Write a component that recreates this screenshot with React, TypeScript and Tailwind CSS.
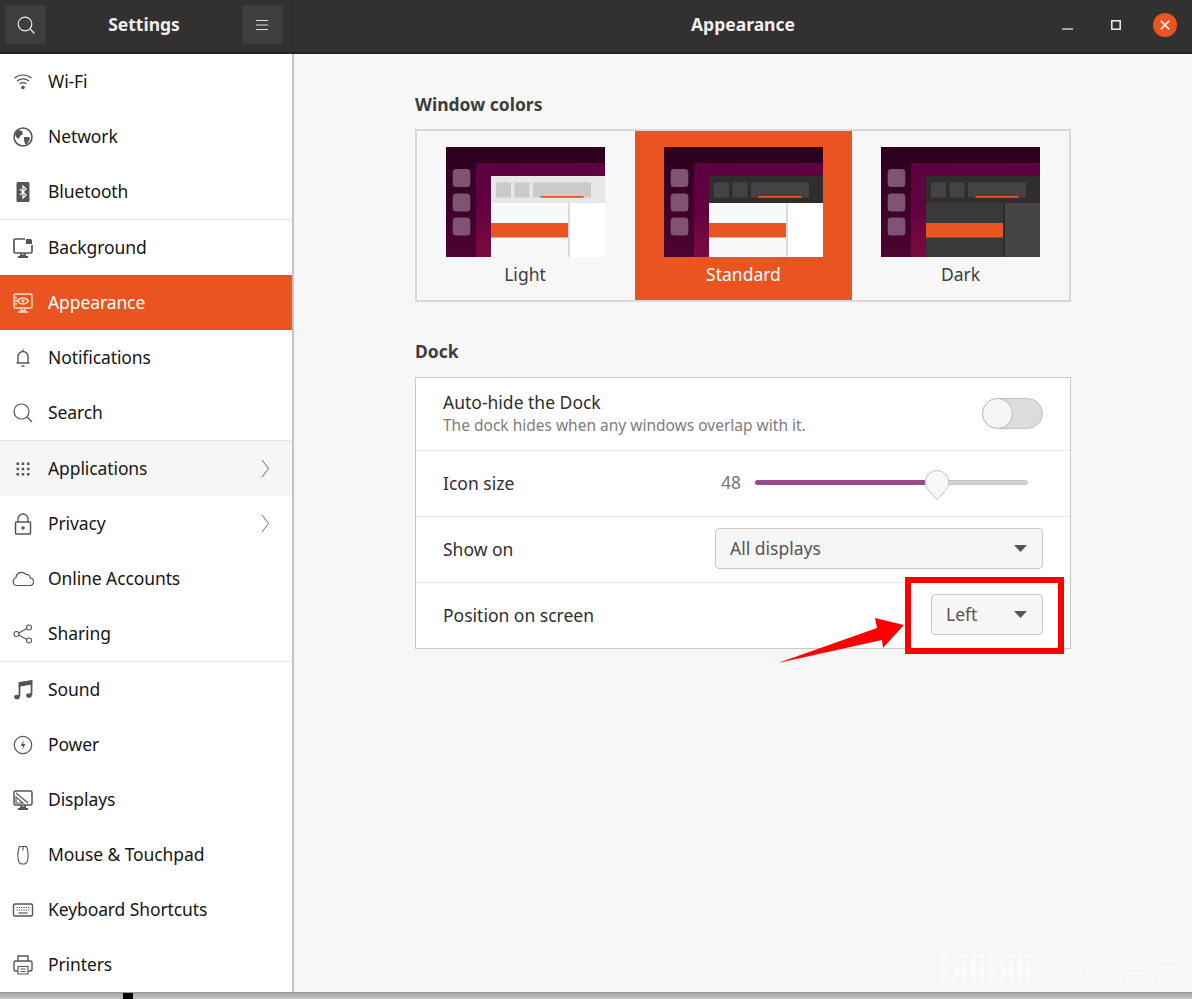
import React from "react";

const S = (p: { children: React.ReactNode; c?: string }) => (
  <svg width="24" height="24" viewBox="0 0 24 24" fill="none" stroke="currentColor" strokeWidth="1.4" className={p.c ?? "text-[#555]"}>{p.children}</svg>
);

const icons: Record<string, React.ReactNode> = {
  wifi: <S><path d="M3.500 8c4.800-4 12.200-4 17 0M6 11c3.500-2.800 8.500-2.800 12 0M8.500 13.800c2-1.400 5-1.400 7 0" strokeWidth="1.200" /><circle cx="12" cy="17.500" r="1.800" fill="currentColor" stroke="none" /></S>,
  network: <S><circle cx="12" cy="12" r="9" strokeWidth="1.600" /><path d="M7 5l4 1 1 3-3 2-1 3-3-2-1-3zM13 12l5 0 1 2-3 5-2 0-1-4z" fill="currentColor" stroke="none" /></S>,
  bluetooth: <S><rect x="5.500" y="2" width="13" height="20" rx="1.500" fill="currentColor" stroke="none" /><path d="M9 9l6 6-3 3V6l3 3-6 6" stroke="#fff" strokeWidth="1.200" /></S>,
  background: <S><path d="M14 3H4.500A1.500 1.500 0 0 0 3 4.500v11A1.500 1.500 0 0 0 4.500 17h15a1.500 1.500 0 0 0 1.500-1.500V9" strokeWidth="1.700" /><path d="M15 3h4.500A1.500 1.500 0 0 1 21 4.500V8h-6z" fill="currentColor" stroke="none" /><path d="M10 17.500v2h4v-2M7 21h10" strokeWidth="1.800" /></S>,
  appearance: <S c="text-[#fbd9c6]"><rect x="3" y="3" width="18" height="14" rx="1.500" /><path d="M6.500 10c3-4 8-4 11 0-3 4-8 4-11 0z" /><circle cx="12" cy="10" r="1.600" fill="currentColor" stroke="none" /><path d="M3 7h3M3 10h3M3 13h3M10 17.500v2h4v-2M7 21h10" /></S>,
  bell: <S><path d="M7 17v-6.500a5 5 0 0 1 10 0V17M5.500 17h13M10.500 20h3M12 3.500v2" /></S>,
  search: <S><circle cx="10.500" cy="10.500" r="7.500" strokeWidth="1.200" /><path d="M16 16l5 5" strokeWidth="1.200" /></S>,
  apps: <S><g fill="currentColor" stroke="none"><rect x="5.500" y="5.500" width="2.500" height="2.500" /><rect x="10.700" y="5.500" width="2.500" height="2.500" /><rect x="16" y="5.500" width="2.500" height="2.500" /><rect x="5.500" y="10.700" width="2.500" height="2.500" /><rect x="10.700" y="10.700" width="2.500" height="2.500" /><rect x="16" y="10.700" width="2.500" height="2.500" /><rect x="5.500" y="16" width="2.500" height="2.500" /><rect x="10.700" y="16" width="2.500" height="2.500" /><rect x="16" y="16" width="2.500" height="2.500" /></g></S>,
  lock: <S><rect x="4.500" y="10" width="15" height="12" rx=".8" strokeWidth="1.500" /><path d="M7 10V7a5 5 0 0 1 10 0v3" strokeWidth="1.300" /><rect x="10.500" y="14.500" width="3" height="3" fill="currentColor" stroke="none" /></S>,
  cloud: <S><path d="M6 18.500a4 4 0 0 1-1-7.800 5.500 5.500 0 0 1 9.800-3.200 4 4 0 0 1 4.700 3.500 3.800 3.800 0 0 1-.5 7.500z" strokeWidth="1.200" /></S>,
  share: <S><circle cx="5.500" cy="12" r="2.500" strokeWidth="1.100" /><circle cx="18" cy="5.500" r="2.500" strokeWidth="1.100" /><circle cx="18" cy="18.500" r="2.500" strokeWidth="1.100" /><path d="M7.800 11l8-4.400M7.800 13l8 4.400" strokeWidth="1.100" /></S>,
  sound: <S><path d="M8.500 18.500V5l12-2v14" strokeWidth="1.800" /><path d="M8.500 5l12-2v3l-12 2z" fill="currentColor" /><ellipse cx="6" cy="19" rx="2.800" ry="2.300" fill="currentColor" stroke="none" /><ellipse cx="18" cy="17.500" rx="2.800" ry="2.300" fill="currentColor" stroke="none" /></S>,
  power: <S><circle cx="12" cy="12" r="8.700" strokeWidth="1.200" /><path d="M13 7l-3.500 6H12l-1 4 3.500-6H12z" fill="currentColor" stroke="none" /></S>,
  display: <S><rect x="3" y="3" width="18" height="14" rx="1.500" strokeWidth="1.500" /><path d="M5 5l12 10M5 9v6h7z" strokeWidth="1.100" /><path d="M10 17.500v2h4v-2M7 21h10" strokeWidth="1.800" /></S>,
  mouse: <S><path d="M8.500 3.500h7c1.500 4 2 10 1 14a4 4 0 0 1-4.500 3.500A4 4 0 0 1 7.500 17.500c-1-4-.5-10 1-14zM12 3.500v4" strokeWidth="1.100" /></S>,
  keyboard: <S><rect x="2.500" y="6" width="19" height="12" rx="1.500" strokeWidth="1.400" /><path d="M5.500 9.500h13M5.500 12h13" strokeDasharray="1.300 1" strokeWidth="1.200" /><path d="M7.500 15h9" strokeWidth="1.200" /></S>,
  printer: <S><path d="M7 8V3h10v5M6.500 18H4.500A1.500 1.500 0 0 1 3 16.500v-7A1.500 1.500 0 0 1 4.500 8h15A1.500 1.500 0 0 1 21 9.500v7a1.500 1.500 0 0 1-1.500 1.500h-2" strokeWidth="1.400" /><path d="M7 13.500h10V21H7zM9.500 16h5M9.500 18.500h5" strokeWidth="1.200" /></S>,
};

type Row = { k: string; t: string; chevron?: boolean; active?: boolean; hover?: boolean };
const groups: Row[][] = [
  [{ k: "wifi", t: "Wi-Fi" }, { k: "network", t: "Network" }, { k: "bluetooth", t: "Bluetooth" }],
  [{ k: "background", t: "Background" }, { k: "appearance", t: "Appearance", active: true }, { k: "bell", t: "Notifications" }, { k: "search", t: "Search" }],
  [{ k: "apps", t: "Applications", chevron: true, hover: true }, { k: "lock", t: "Privacy", chevron: true }, { k: "cloud", t: "Online Accounts" }, { k: "share", t: "Sharing" }],
  [{ k: "sound", t: "Sound" }, { k: "power", t: "Power" }, { k: "display", t: "Displays" }, { k: "mouse", t: "Mouse & Touchpad" }, { k: "keyboard", t: "Keyboard Shortcuts" }, { k: "printer", t: "Printers" }],
];

function SideRow({ r }: { r: Row }) {
  return (
    <div className={`h-[55px] flex items-center pl-[11px] pr-[22px] text-[17.5px] ${r.active ? "bg-[#e95420] text-white" : r.hover ? "bg-[#f6f6f6] text-[#161616]" : "text-[#161616]"}`}>
      <span className="w-[24px] h-[24px] flex-none">{icons[r.k]}</span>
      <span className="ml-[13px] flex-1 tracking-[-0.1px]">{r.t}</span>
      {r.chevron && (
        <svg width="9" height="19" viewBox="0 0 9 19" fill="none" stroke="#666" strokeWidth="1" className="mb-[1px]"><path d="M1 1l6.500 8.500L1 18" /></svg>
      )}
    </div>
  );
}

function Preview({ kind }: { kind: "light" | "standard" | "dark" }) {
  const head = kind === "light" ? "#e5e7e9" : "#2f2d2d";
  const btn = kind === "light" ? "#c9caca" : "#444343";
  const body = kind === "dark" ? "#393939" : "#f8f9fb";
  const side = kind === "dark" ? "#454545" : "#ffffff";
  const sep = kind === "dark" ? "#2c2c2c" : "#dcdadc";
  const id = `g-${kind}`;
  return (
    <svg width="159" height="110" viewBox="0 0 159 110" className="block">
      <defs>
        <linearGradient id={id} x1="0" y1="0" x2="0.25" y2="1">
          <stop offset="0" stopColor="#5c0040" />
          <stop offset="0.55" stopColor="#610040" />
          <stop offset="1" stopColor="#7c0a41" />
        </linearGradient>
        <linearGradient id={`${id}d`} x1="0" y1="0" x2="0" y2="1">
          <stop offset="0" stopColor="#320024" />
          <stop offset="1" stopColor="#4c0430" />
        </linearGradient>
      </defs>
      <rect width="159" height="110" fill={`url(#${id})`} />
      <rect y="16" width="30" height="94" fill={`url(#${id}d)`} />
      <rect width="159" height="16" fill="#2c001e" />
      {[22, 46.500, 70.500].map((y) => (
        <rect key={y} x="6.700" y={y} width="17.600" height="18" rx="3.500" fill="#7e5472" />
      ))}
      <rect x="45" y="29" width="114" height="27" fill={head} />
      <rect x="50" y="35.500" width="15" height="15" fill={btn} />
      <rect x="68.500" y="35.500" width="15" height="15" fill={btn} />
      <rect x="87" y="35.500" width="58" height="15" fill={btn} />
      <rect x="94.500" y="49" width="43" height="1.800" fill="#e95420" />
      <rect x="45" y="56" width="77" height="54" fill={body} />
      <rect x="122" y="56" width="2" height="54" fill={sep} />
      <rect x="124" y="56" width="35" height="54" fill={side} />
      <rect x="45" y="76" width="77" height="14.500" fill="#e95420" />
    </svg>
  );
}

function ThemeCell({ kind, label, active, w }: { kind: "light" | "standard" | "dark"; label: string; active?: boolean; w: string }) {
  return (
    <div className={`${w} h-full flex flex-col items-center pt-[15px] ${active ? "bg-[#e95420] text-white" : "text-[#3d3d3d]"}`}>
      <Preview kind={kind} />
      <span className="mt-[4px] text-[17.5px] leading-[26px]">{label}</span>
    </div>
  );
}

function Select({ label, w }: { label: string; w: string }) {
  return (
    <div className={`${w} h-[41px] mb-[2px] rounded-[4px] border border-[#cdc7c2] bg-[#f6f6f6] flex items-center pl-[14px] pr-[15px] text-[17.500px] text-[#555]`}>
      <span className="flex-1 mb-[1px]">{label}</span>
      <svg width="13" height="7" viewBox="0 0 13 7"><path d="M0 0h13L6.500 7z" fill="#555" /></svg>
    </div>
  );
}

export default function App() {
  return (
    <div className="relative w-[1192px] h-[999px] overflow-hidden bg-[#f7f7f7] font-['Noto_Sans','Liberation_Sans',sans-serif]">
      <div className="h-[54px] bg-[#323030] border-b-2 border-[#242222] flex text-white">
        <div className="w-[293px] flex-none flex items-center justify-between pl-[5px] pr-[9px] border-r border-[#272525] pb-[3px]">
          <div className="w-[41px] h-[39px] rounded-[4px] bg-[#3f3d3d] flex items-center justify-center">
            <svg width="20" height="20" viewBox="0 0 20 20" fill="none" stroke="#e8e8e8" strokeWidth="1.200"><circle cx="9" cy="9" r="6.800" /><path d="M14 14l4.500 4.500" /></svg>
          </div>
          <span className="font-bold text-[17.500px] text-[#efefef] mb-[1px]">Settings</span>
          <div className="w-[41px] h-[39px] rounded-[4px] bg-[#3f3d3d] flex items-center justify-center">
            <svg width="14" height="12" viewBox="0 0 14 12" stroke="#e0e0e0" strokeWidth="1.200"><path d="M1 1.500h12M1 6h12M1 10.500h12" /></svg>
          </div>
        </div>
        <div className="flex-1 flex items-center justify-between pb-[3px]">
          <span className="ml-[398px] font-bold text-[17.500px] text-[#efefef] mb-[1px]">Appearance</span>
          <div className="flex items-center gap-[25px] pr-[15px]">
            <div className="w-[24px] h-[24px] flex items-center justify-center">
              <svg width="11" height="10" viewBox="0 0 11 10" stroke="#f0f0f0" strokeWidth="1.200" className="mt-[4px]"><path d="M0 7h11" /></svg>
            </div>
            <div className="w-[24px] h-[24px] flex items-center justify-center">
              <svg width="10" height="10" viewBox="0 0 10 10" fill="none" stroke="#f0f0f0" strokeWidth="1.500"><rect x=".8" y=".8" width="8.400" height="8.400" /></svg>
            </div>
            <div className="w-[24px] h-[24px] rounded-full bg-[#e95420] flex items-center justify-center">
              <svg width="10" height="10" viewBox="0 0 10 10" stroke="#fff" strokeWidth="1.600"><path d="M.8.8l8.400 8.400M9.200.8L.8 9.200" /></svg>
            </div>
          </div>
        </div>
      </div>

      <div className="h-[939px] flex border-b border-[#9a9a9a]">
        <div className="w-[292px] flex-none bg-white">
          {groups.map((g, i) => (
            <div key={i} className={i < groups.length - 1 ? "border-b border-[#e6e6e6]" : ""}>
              {g.map((r) => <SideRow key={r.t} r={r} />)}
            </div>
          ))}
        </div>
        <div className="w-[2px] flex-none bg-[#c4c4c4]" />
        <div className="flex-1 bg-[#f7f7f7] pl-[121px] pt-[37px]">
          <div className="w-[656px]">
            <h2 className="text-[17.500px] font-bold text-[#3d3d3d] leading-[26px]">Window colors</h2>
            <div className="mt-[12px] h-[173px] border-2 border-[#d8d8d8] flex">
              <ThemeCell w="w-[218px] pr-[2px] pt-[16px]" kind="light" label="Light" />
              <ThemeCell w="w-[217px] pt-[16px]" kind="standard" label="Standard" active />
              <ThemeCell w="flex-1 pt-[16px]" kind="dark" label="Dark" />
            </div>
            <h2 className="mt-[36px] text-[17.500px] font-bold text-[#3d3d3d] leading-[26px]">Dock</h2>
            <div className="mt-[13px] border border-[#c8c8c8] bg-white text-[#2e2e2e] text-[17.500px]">
              <div className="h-[73px] flex items-center justify-between pl-[27px] pr-[27px] border-b border-[#eaeaea]">
                <div className="leading-[23px]">
                  <div>Auto-hide the Dock</div>
                  <div className="text-[15.500px] text-[#7d7d7d]">The dock hides when any windows overlap with it.</div>
                </div>
                <div className="w-[61px] h-[31px] mb-[2px] rounded-full border border-[#c2c2c2] bg-[#dcdcdc] relative">
                  <div className="absolute left-[-1px] top-[-1px] w-[31px] h-[31px] rounded-full bg-[#f6f6f6] border border-[#bdbdbd]" />
                </div>
              </div>
              <div className="h-[66px] flex items-center pl-[27px] pr-[42px] border-b border-[#eaeaea]">
                <span className="flex-1">Icon size</span>
                <span className="text-[#777] mr-[14px] mb-[2px]">48</span>
                <div className="w-[273px] h-[5px] mb-[2px] rounded-full bg-[#d2d2d2] border border-[#c6c6c6] relative">
                  <div className="h-[5px] mt-[-1px] ml-[-1px] w-[172px] rounded-full bg-[#924d8b]" />
                  <svg width="26" height="32" viewBox="0 0 26 32" className="absolute left-[168px] top-[-12px]">
                    <path d="M13 30.500 L4.500 21.500 A11.800 11.800 0 1 1 21.500 21.500 Z" fill="#f8f8f8" stroke="#c4c4c4" strokeWidth="1" />
                  </svg>
                </div>
              </div>
              <div className="h-[66px] flex items-center justify-between pl-[27px] pr-[27px] border-b border-[#eaeaea]">
                <span>Show on</span>
                <Select label="All displays" w="w-[328px]" />
              </div>
              <div className="h-[65px] flex items-center justify-between pl-[27px] pr-[27px]">
                <span>Position on screen</span>
                <Select label="Left" w="w-[112px]" />
              </div>
            </div>
          </div>
        </div>
      </div>
      <div className="h-[6px] bg-gradient-to-b from-[#a8a8a8] to-[#c4c4c4]">
        <div className="ml-[123px] w-[10px] h-[6px] bg-black" />
      </div>

      <div className="absolute left-[905px] top-[577px] w-[159px] h-[77px] border-[6px] border-[#fe0000]" />
      <svg width="140" height="60" viewBox="770 612 140 60" className="absolute left-[770px] top-[612px]">
        <path d="M904 625L875 618 877 628 778 663 882 640 883 648z" fill="#fe0000" />
      </svg>
      <div className="absolute left-[938px] top-[950px] flex items-end gap-[9px] text-white/60 leading-none">
        <span className="text-[38px] font-bold tracking-[-2px] font-['Liberation_Sans',sans-serif]">bilibili</span>
        <span className="text-[35px] font-['Noto_Sans_CJK_SC',sans-serif] font-light text-white/50">霓蓝晴海</span>
      </div>
    </div>
  );
}
